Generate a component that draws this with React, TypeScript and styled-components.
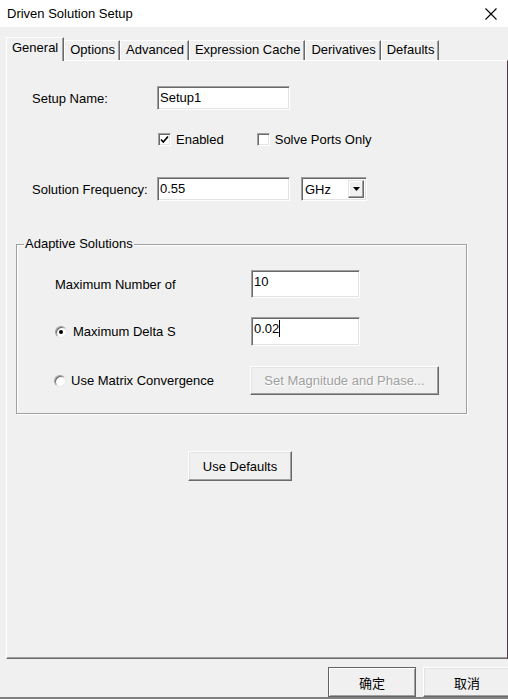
import React from "react";
import styled, { createGlobalStyle } from "styled-components";

const Global = createGlobalStyle`
  html, body { margin: 0; padding: 0; background: #f0f0f0; }
  body { font-family: "Liberation Sans", Arial, "Noto Sans CJK SC", sans-serif; font-size: 13px; color: #000; }
  * { box-sizing: border-box; }
`;

const Window = styled.div`
  width: 508px;
  height: 699px;
  display: flex;
  flex-direction: column;
  overflow: hidden;
  background: #f0f0f0;
`;

const TitleBar = styled.div`
  height: 27px;
  flex: none;
  background: #fff;
  display: flex;
  align-items: center;
  justify-content: space-between;
  padding: 0 11px 0 7px;
`;

const Title = styled.span`
  font-size: 13px;
  color: #000;
`;

const Main = styled.div`
  flex: 1;
  display: flex;
  flex-direction: column;
  padding: 10px 0 0 6px;
  min-height: 0;
`;

const TabStrip = styled.div`
  height: 23px;
  flex: none;
  display: flex;
  align-items: flex-end;
`;

const Tab = styled.div<{ $active?: boolean }>`
  height: ${(p) => (p.$active ? 24 : 20)}px;
  margin-bottom: ${(p) => (p.$active ? -1 : 0)}px;
  position: relative;
  z-index: ${(p) => (p.$active ? 1 : 0)};
  padding: ${(p) => (p.$active ? "2px 5px 0 5px" : "0 4px 2px 5px")};
  background: #f0f0f0;
  border-top: 1px solid #fff;
  border-left: 1px solid #fff;
  border-right: 1px solid #696969;
  box-shadow: inset -1px 0 0 #a0a0a0;
  display: flex;
  align-items: ${(p) => (p.$active ? "flex-start" : "center")};
  white-space: nowrap;
`;

const Panel = styled.div`
  flex: 1;
  display: flex;
  flex-direction: column;
  border-top: 1px solid #fff;
  border-left: 1px solid #fff;
  border-right: 1px solid #4a3a48;
  border-bottom: 1px solid #696969;
  box-shadow: inset 0 -1px 0 #a0a0a0;
  padding: 25px 0 0 9px;
`;

const FieldRow = styled.div<{ $top: number }>`
  display: flex;
  align-items: center;
  height: 24px;
  margin-top: ${(p) => p.$top}px;
  padding-left: 16px;
`;

const Label = styled.span<{ $w: number }>`
  width: ${(p) => p.$w}px;
  flex: none;
  white-space: nowrap;
`;

const TextBox = styled.div<{ $w: number; $h: number }>`
  width: ${(p) => p.$w}px;
  height: ${(p) => p.$h}px;
  flex: none;
  background: #fff;
  border: 1px solid;
  border-color: #a0a0a0 #fff #fff #a0a0a0;
  box-shadow: inset 1px 1px 0 #696969, inset -1px -1px 0 #e3e3e3;
  padding: 3px 0 0 2px;
  display: flex;
  align-items: flex-start;
  white-space: nowrap;
  line-height: 15px;
`;

const Caret = styled.span`
  display: inline-block;
  width: 1px;
  height: 17px;
  background: #000;
  margin-top: -1px;
`;

const CheckRow = styled.div`
  display: flex;
  align-items: center;
  height: 24px;
  margin-top: 17px;
  padding-left: 142px;
  gap: 33px;
`;

const CheckItem = styled.label`
  display: flex;
  align-items: center;
  gap: 5px;
`;

const CheckBox = styled.span`
  width: 13px;
  height: 13px;
  background: #fff;
  border: 1px solid;
  border-color: #a0a0a0 #fff #fff #a0a0a0;
  box-shadow: inset 1px 1px 0 #696969, inset -1px -1px 0 #e3e3e3;
  display: flex;
  align-items: center;
  justify-content: center;
`;

const Select = styled.div`
  width: 66px;
  height: 24px;
  margin-left: 11px;
  background: #fff;
  border: 1px solid;
  border-color: #a0a0a0 #fff #fff #a0a0a0;
  box-shadow: inset 1px 1px 0 #696969, inset -1px -1px 0 #e3e3e3;
  display: flex;
  align-items: center;
  justify-content: space-between;
  padding: 2px 2px 2px 3px;
`;

const DropButton = styled.span`
  width: 16px;
  height: 100%;
  background: #f0f0f0;
  border: 1px solid;
  border-color: #e3e3e3 #696969 #696969 #e3e3e3;
  box-shadow: inset -1px -1px 0 #a0a0a0, inset 1px 1px 0 #fff;
  display: flex;
  align-items: center;
  justify-content: center;
`;

const Group = styled.div`
  position: relative;
  width: 451px;
  height: 170px;
  margin-top: 43px;
  border: 1px solid #a0a0a0;
  box-shadow: inset 1px 1px 0 #fff, 1px 1px 0 #fff;
  padding: 25px 0 0 38px;
  display: flex;
  flex-direction: column;
`;

const Legend = styled.span`
  position: absolute;
  top: -9px;
  left: 7px;
  padding: 0 1px;
  background: #f0f0f0;
  line-height: 16px;
`;

const GroupRow = styled.div<{ $top: number; $h: number }>`
  display: flex;
  align-items: center;
  height: ${(p) => p.$h}px;
  margin-top: ${(p) => p.$top}px;
`;

const RadioLabel = styled.span<{ $gap: number; $shift?: number }>`
  width: 196px;
  flex: none;
  display: flex;
  align-items: center;
  gap: ${(p) => p.$gap}px;
  margin-left: ${(p) => p.$shift ?? 0}px;
  white-space: nowrap;
`;

const Radio = styled.span<{ $on?: boolean }>`
  width: 12px;
  height: 12px;
  border-radius: 50%;
  background: #fff;
  border: 1px solid;
  border-color: #a0a0a0 #e8e8e8 #e8e8e8 #a0a0a0;
  box-shadow: inset 1px 1px 0 #696969;
  display: flex;
  align-items: center;
  justify-content: center;
  &::after {
    content: "";
    width: 4px;
    height: 4px;
    border-radius: 50%;
    background: ${(p) => (p.$on ? "#000" : "transparent")};
  }
`;

const Button = styled.button<{ $w: number; $h: number; $default?: boolean }>`
  width: ${(p) => p.$w}px;
  height: ${(p) => p.$h}px;
  flex: none;
  background: #f0f0f0;
  font: inherit;
  font-size: 13px;
  color: ${(p) => (p.disabled ? "#a0a0a0" : "#000")};
  text-shadow: ${(p) => (p.disabled ? "1px 1px 0 #fff" : "none")};
  border: 1px solid;
  border-color: ${(p) => (p.$default ? "#646464" : "#fff #696969 #696969 #fff")};
  box-shadow: ${(p) =>
    p.$default
      ? "inset 1px 1px 0 #fff, inset -1px -1px 0 #a0a0a0"
      : "inset -1px -1px 0 #a0a0a0, inset 1px 1px 0 #e3e3e3"};
  padding: 0;
  display: flex;
  align-items: center;
  justify-content: center;
  cursor: default;
`;

const DefaultsWrap = styled.div`
  margin-top: 37px;
  padding-left: 172px;
`;

const Footer = styled.div`
  height: 40px;
  flex: none;
  display: flex;
  gap: 7px;
  padding: 8px 0 0 328px;
  border-bottom: 2px solid #808080;
`;

const CJK = styled.span`
  font-family: "Noto Sans CJK SC", sans-serif;
  font-size: 13px;
`;

const CloseIcon = () => (
  <svg width="12" height="12" viewBox="0 0 12 12">
    <path d="M0.5 0.5 L11.5 11.5 M11.5 0.5 L0.5 11.5" stroke="#000" strokeWidth="1.1" fill="none" />
  </svg>
);

const CheckMark = () => (
  <svg width="9" height="9" viewBox="0 0 9 9">
    <path d="M1 4.5 L3.3 7 L8 1.5" stroke="#000" strokeWidth="1.7" fill="none" />
  </svg>
);

const DownArrow = () => (
  <svg width="7" height="4" viewBox="0 0 7 4">
    <path d="M0 0 H7 L3.5 4 Z" fill="#000" />
  </svg>
);

const tabs = ["General", "Options", "Advanced", "Expression Cache", "Derivatives", "Defaults"];

export default function App() {
  return (
    <>
      <Global />
      <Window>
        <TitleBar>
          <Title>Driven Solution Setup</Title>
          <CloseIcon />
        </TitleBar>
        <Main>
          <TabStrip>
            {tabs.map((t, i) => (
              <Tab key={t} $active={i === 0}>
                {t}
              </Tab>
            ))}
          </TabStrip>
          <Panel>
            <FieldRow $top={0}>
              <Label $w={125}>Setup Name:</Label>
              <TextBox $w={133} $h={24}>Setup1</TextBox>
            </FieldRow>
            <CheckRow>
              <CheckItem>
                <CheckBox>
                  <CheckMark />
                </CheckBox>
                Enabled
              </CheckItem>
              <CheckItem>
                <CheckBox />
                Solve Ports Only
              </CheckItem>
            </CheckRow>
            <FieldRow $top={26}>
              <Label $w={125}>Solution Frequency:</Label>
              <TextBox $w={133} $h={24}>0.55</TextBox>
              <Select>
                <span>GHz</span>
                <DropButton>
                  <DownArrow />
                </DropButton>
              </Select>
            </FieldRow>
            <Group>
              <Legend>Adaptive Solutions</Legend>
              <GroupRow $top={0} $h={28}>
                <RadioLabel $gap={0}>Maximum Number of</RadioLabel>
                <TextBox $w={109} $h={28}>10</TextBox>
              </GroupRow>
              <GroupRow $top={19} $h={29}>
                <RadioLabel $gap={6}>
                  <Radio $on />
                  Maximum Delta S
                </RadioLabel>
                <TextBox $w={109} $h={29}>
                  0.02
                  <Caret />
                </TextBox>
              </GroupRow>
              <GroupRow $top={20} $h={29}>
                <RadioLabel $gap={5} $shift={-1}>
                  <Radio />
                  Use Matrix Convergence
                </RadioLabel>
                <Button $w={189} $h={29} disabled>
                  Set Magnitude and Phase...
                </Button>
              </GroupRow>
            </Group>
            <DefaultsWrap>
              <Button $w={104} $h={30}>Use Defaults</Button>
            </DefaultsWrap>
          </Panel>
        </Main>
        <Footer>
          <Button $w={88} $h={30} $default>
            <CJK>确定</CJK>
          </Button>
          <Button $w={88} $h={30}>
            <CJK>取消</CJK>
          </Button>
        </Footer>
      </Window>
    </>
  );
}
